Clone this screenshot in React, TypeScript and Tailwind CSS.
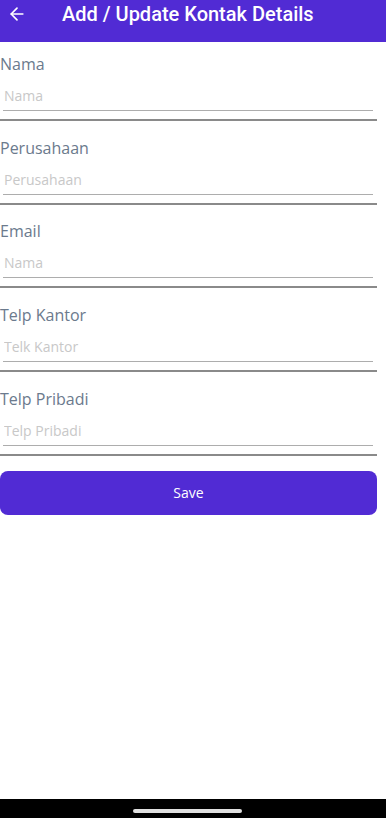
import { ArrowLeft } from "lucide-react";

const fields = [
  { label: "Nama", placeholder: "Nama" },
  { label: "Perusahaan", placeholder: "Perusahaan" },
  { label: "Email", placeholder: "Nama" },
  { label: "Telp Kantor", placeholder: "Telk Kantor" },
  { label: "Telp Pribadi", placeholder: "Telp Pribadi" },
];

function Field({ label, placeholder }: { label: string; placeholder: string }) {
  return (
    <div className="flex flex-col">
      <div className="h-[22px] text-[16px] leading-[22px] text-[#6b7a8d]">{label}</div>
      <div className="ml-[3px] mr-[13px] flex h-[36px] items-end border-b border-[#adadad] pb-[4px]">
        <input
          placeholder={placeholder}
          className="w-full bg-transparent pl-[1px] text-[14px] leading-[20px] text-gray-800 outline-none placeholder:text-[#c8c8c8]"
          style={{ fontFamily: "'Open Sans', sans-serif" }}
        />
      </div>
      <div className="mt-[8px] h-[2px] w-[377px] bg-[#8a8a8a]" />
    </div>
  );
}

export default function App() {
  return (
    <div
      className="flex h-[818px] w-[386px] flex-col bg-white"
      style={{ fontFamily: "'Open Sans', sans-serif" }}
    >
      {/* Toolbar */}
      <div className="flex h-[42px] shrink-0 items-center bg-[#512bd4] text-white">
        <ArrowLeft size={20} strokeWidth={2} className="ml-[7px] -mt-[14px]" />
        <h1
          className="ml-[35px] -mt-[14px] text-[20px] font-medium leading-none"
          style={{ fontFamily: "Roboto, sans-serif" }}
        >
          Add / Update Kontak Details
        </h1>
      </div>

      {/* Form */}
      <div className="mt-[11px] flex flex-col gap-[15.7px]">
        {fields.map((f) => (
          <Field key={f.label} label={f.label} placeholder={f.placeholder} />
        ))}
      </div>

      <button className="mt-[15px] h-[44px] w-[377px] rounded-[8px] bg-[#512bd4] text-[14px] text-white">
        Save
      </button>

      <div className="flex-1" />

      {/* Nav bar */}
      <div className="flex h-[19px] shrink-0 items-center bg-black">
        <div className="ml-[133px] mt-[4px] h-[4px] w-[109px] rounded-full bg-[#e0e0e0]" />
      </div>
    </div>
  );
}
